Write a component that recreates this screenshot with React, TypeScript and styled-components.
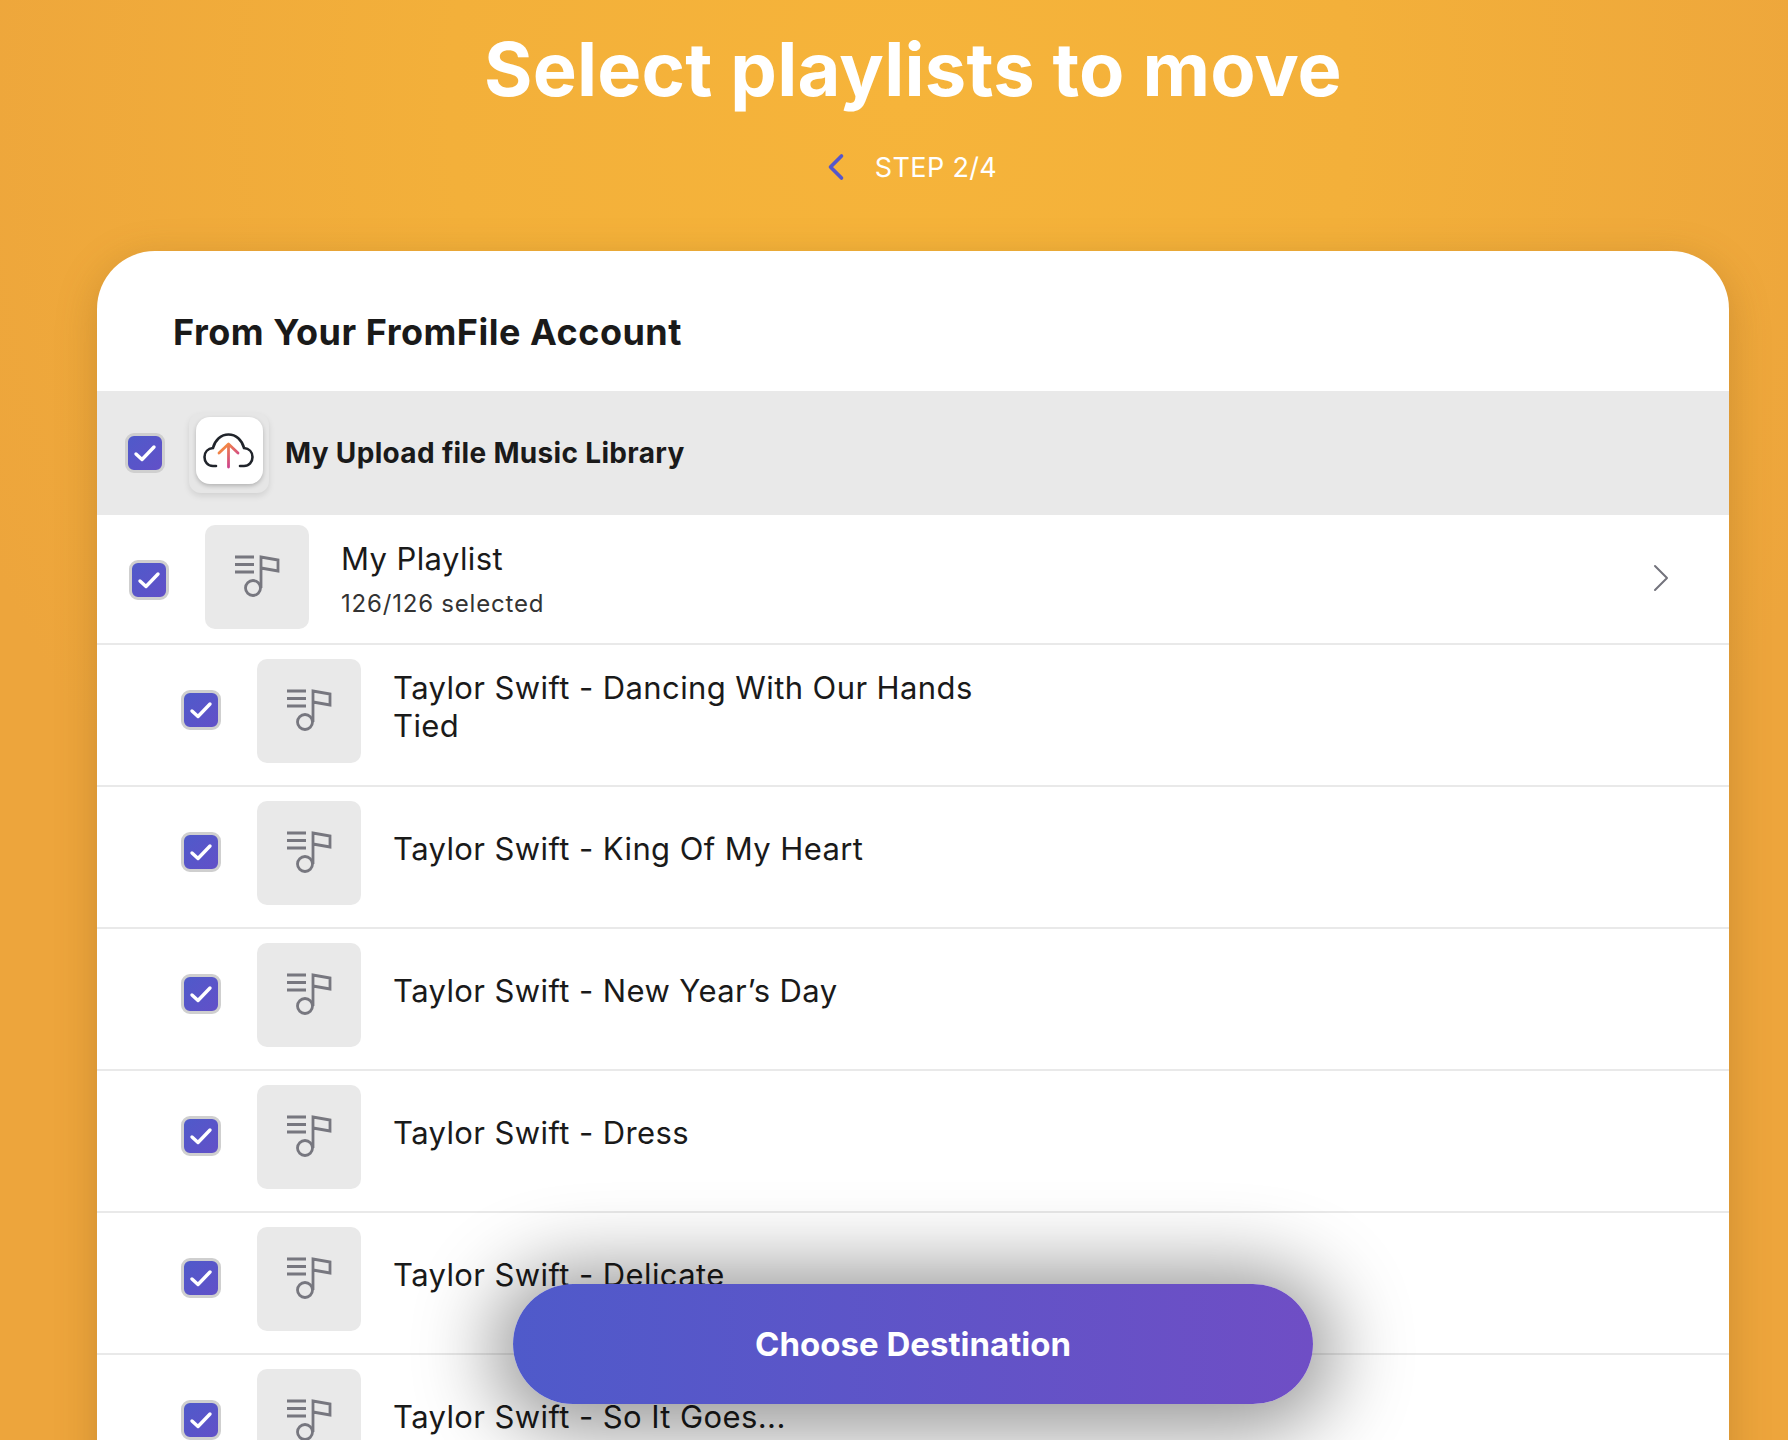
import React from "react";
import styled, { createGlobalStyle } from "styled-components";
import { ChevronLeft, ChevronRight } from "lucide-react";

const Global = createGlobalStyle`
  html, body { margin: 0; padding: 0; }
  body { font-family: Inter, "Liberation Sans", sans-serif; -webkit-font-smoothing: antialiased; }
`;

const Page = styled.div`
  position: relative;
  width: 1788px;
  height: 1440px;
  overflow: hidden;
  box-sizing: border-box;
  padding: 0 59px 0 97px;
  background: radial-gradient(ellipse 1000px 1100px at 900px 100px, #f6b43a 0%, #f3b03a 45%, #eda53c 100%);
`;

const Title = styled.h1`
  margin: 0;
  padding-top: 29px;
  height: 84px;
  text-align: center;
  color: #fff;
  font-size: 74px;
  line-height: 80px;
  font-weight: 700;
  letter-spacing: 0.2px;
`;

const StepRow = styled.div`
  display: flex;
  justify-content: center;
  align-items: center;
  gap: 17px;
  height: 40px;
  margin-top: 34px;
  padding-right: 15px;
  color: #fff;
  font-size: 27px;
  letter-spacing: 0.35px;
  font-weight: 400;
`;

const BackIcon = styled(ChevronLeft)`
  width: 44px;
  height: 44px;
  color: #5557cc;
  stroke-width: 2;
`;

const Card = styled.section`
  margin-top: 64px;
  background: #fff;
  border-radius: 58px 58px 0 0;
  box-shadow: 0 10px 40px rgba(120, 80, 20, 0.28);
  height: 1300px;
  overflow: hidden;
`;

const CardTitle = styled.h2`
  margin: 0;
  height: 140px;
  box-sizing: border-box;
  padding: 59px 0 0 76px;
  font-size: 36px;
  line-height: 44px;
  letter-spacing: 0.5px;
  font-weight: 700;
  color: #1a1a1a;
`;

const LibraryRow = styled.div`
  display: flex;
  align-items: center;
  height: 124px;
  padding-left: 28px;
  background: #e9e9e9;
`;

const Row = styled.div<{ $nested?: boolean }>`
  display: flex;
  align-items: center;
  box-sizing: border-box;
  height: ${(p) => (p.$nested ? "142px" : "130px")};
  padding: ${(p) => (p.$nested ? "14px 0 22px 84px" : "10px 0 14px 32px")};
  border-bottom: 2px solid #e9e9e9;
`;

const Check = styled.span<{ $drop?: number }>`
  flex: none;
  box-sizing: border-box;
  width: 40px;
  height: 40px;
  margin-top: ${(p) => p.$drop ?? 0}px;
  display: flex;
  align-items: center;
  justify-content: center;
  border: 3px solid #cfcfcf;
  border-radius: 9px;
  background: linear-gradient(135deg, #4f5aca, #6250c8);
`;

const Thumb = styled.div`
  flex: none;
  width: 104px;
  height: 104px;
  margin-left: 36px;
  display: flex;
  align-items: center;
  justify-content: center;
  border-radius: 10px;
  background: #e9e9e9;
`;

const LogoFrame = styled.div`
  flex: none;
  box-sizing: border-box;
  width: 80px;
  height: 80px;
  margin-left: 24px;
  padding: 4px 0 0 7px;
  border-radius: 12px;
  background: #e6e6e6;
  box-shadow: 0 3px 6px rgba(0, 0, 0, 0.1);
`;

const LogoTile = styled.div`
  width: 67px;
  height: 67px;
  display: flex;
  border-radius: 14px;
  background: #fff;
  box-shadow: 0 2px 4px rgba(0, 0, 0, 0.22);
`;

const LibraryName = styled.div`
  margin-left: 16px;
  font-size: 28px;
  letter-spacing: 0.33px;
  font-weight: 700;
  color: #1a1a1a;
`;

const PlaylistInfo = styled.div`
  flex: 1;
  margin-left: 32px;
  margin-top: 4px;
`;

const Name = styled.div`
  font-size: 31px;
  line-height: 38px;
  letter-spacing: 0.4px;
  color: #1a1a1a;
`;

const Sub = styled.div`
  margin-top: 11px;
  font-size: 24px;
  line-height: 30px;
  letter-spacing: 0.8px;
  color: #333;
`;

const SongName = styled.div`
  width: 620px;
  margin: -9px 0 0 32px;
  font-size: 31px;
  line-height: 38px;
  letter-spacing: 0.4px;
  color: #1a1a1a;
`;

const Arrow = styled(ChevronRight)`
  flex: none;
  width: 48px;
  height: 48px;
  margin: 2px 44px 0 0;
  color: #73737c;
  stroke-width: 1;
`;

const CTA = styled.button`
  position: absolute;
  left: 513px;
  top: 1284px;
  width: 800px;
  height: 120px;
  border: 0;
  border-radius: 60px;
  background: linear-gradient(90deg, #4f5aca, #6f4ec5);
  box-shadow: 0 6px 80px 20px rgba(0, 0, 0, 0.42);
  color: #fff;
  font-family: inherit;
  font-size: 33px;
  font-weight: 700;
`;

const Tick = () => (
  <svg width="24" height="20" viewBox="0 0 24 20" fill="none">
    <path d="M3 11l6 5.5L21 4" stroke="#fff" strokeWidth="3.4" strokeLinecap="round" strokeLinejoin="round" />
  </svg>
);

const Note = () => (
  <svg width="48" height="48" viewBox="0 0 48 48" fill="none" stroke="#77777f" strokeWidth="2.8">
    <path d="M2 4h19M2 11.5h19M2 19h19" />
    <path d="M28 35V4l17 3v11l-17-3" />
    <circle cx="20" cy="35" r="7.5" />
  </svg>
);

const Cloud = () => (
  <svg width="67" height="67" viewBox="0 0 67 67" fill="none">
    <defs>
      <linearGradient id="arrowGrad" gradientUnits="userSpaceOnUse" x1="24" y1="30" x2="41" y2="48">
        <stop offset="0" stopColor="#f8913a" />
        <stop offset="1" stopColor="#c5339f" />
      </linearGradient>
    </defs>
    <path
      d="M20 49H17C11 49 8.5 44 8.5 40C8.5 35 12 31.5 17 31C19 23 25 17.5 32.5 17.5C40 17.5 46 23 48 31C53 31.5 56.5 35 56.5 40C56.5 45 53 49 48 49H44"
      stroke="#20242b"
      strokeWidth="2.6"
      strokeLinecap="round"
    />
    <path d="M23 36l9.5-9 9.5 9M32.5 28v22" stroke="url(#arrowGrad)" strokeWidth="2.8" strokeLinecap="round" strokeLinejoin="round" />
  </svg>
);

const songs = [
  "Taylor Swift - Dancing With Our Hands Tied",
  "Taylor Swift - King Of My Heart",
  "Taylor Swift - New Year’s Day",
  "Taylor Swift - Dress",
  "Taylor Swift - Delicate",
  "Taylor Swift - So It Goes...",
];

export default function App() {
  return (
    <Page>
      <Global />
      <Title>Select playlists to move</Title>
      <StepRow>
        <BackIcon />
        <span>STEP 2/4</span>
      </StepRow>
      <Card>
        <CardTitle>From Your FromFile Account</CardTitle>
        <LibraryRow>
          <Check><Tick /></Check>
          <LogoFrame>
            <LogoTile><Cloud /></LogoTile>
          </LogoFrame>
          <LibraryName>My Upload file Music Library</LibraryName>
        </LibraryRow>
        <Row>
          <Check $drop={5}><Tick /></Check>
          <Thumb><Note /></Thumb>
          <PlaylistInfo>
            <Name>My Playlist</Name>
            <Sub>126/126 selected</Sub>
          </PlaylistInfo>
          <Arrow />
        </Row>
        {songs.map((s) => (
          <Row $nested key={s}>
            <Check $drop={-2}><Tick /></Check>
            <Thumb><Note /></Thumb>
            <SongName>{s}</SongName>
          </Row>
        ))}
      </Card>
      <CTA>Choose Destination</CTA>
    </Page>
  );
}
